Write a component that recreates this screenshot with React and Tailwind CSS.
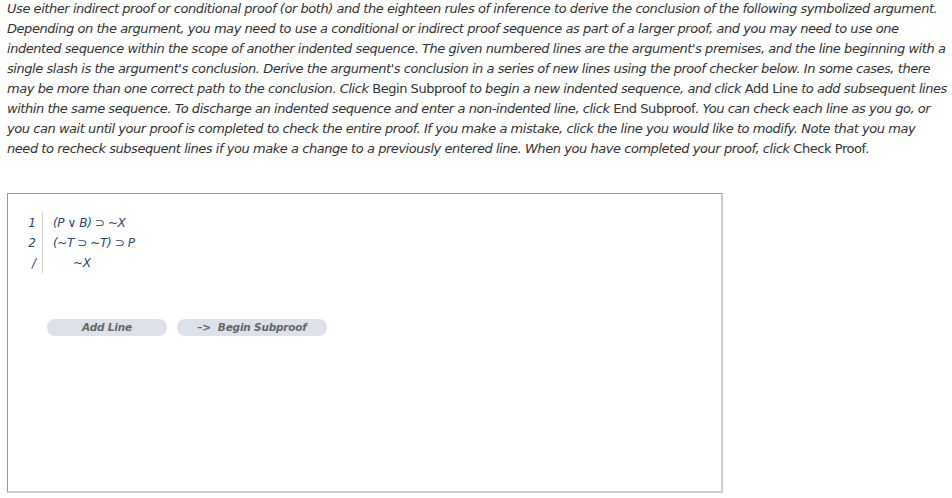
import React from "react";

const lines = [
  <>Use either indirect proof or conditional proof (or both) and the eighteen rules of inference to derive the conclusion of the following symbolized argument.</>,
  <>Depending on the argument, you may need to use a conditional or indirect proof sequence as part of a larger proof, and you may need to use one</>,
  <>indented sequence within the scope of another indented sequence. The given numbered lines are the argument's premises, and the line beginning with a</>,
  <>single slash is the argument's conclusion. Derive the argument's conclusion in a series of new lines using the proof checker below. In some cases, there</>,
  <>may be more than one correct path to the conclusion. Click <span className="not-italic">Begin Subproof</span> to begin a new indented sequence, and click <span className="not-italic">Add Line</span> to add subsequent lines</>,
  <>within the same sequence. To discharge an indented sequence and enter a non-indented line, click <span className="not-italic">End Subproof</span>. You can check each line as you go, or</>,
  <>you can wait until your proof is completed to check the entire proof. If you make a mistake, click the line you would like to modify. Note that you may</>,
  <>need to recheck subsequent lines if you make a change to a previously entered line. When you have completed your proof, click <span className="not-italic">Check Proof</span>.</>,
];

export default function App() {
  return (
    <div className="w-[952px] h-[498px] bg-white overflow-hidden" style={{ fontFamily: '"DejaVu Sans", Verdana, sans-serif' }}>
      <div className="pl-[7px] text-[13px] leading-[20px] italic text-[#333] tracking-[-0.45px] -mt-[1px]">
        {lines.map((l, i) => (
          <div key={i} className="whitespace-nowrap">{l}</div>
        ))}
      </div>
      <div className="ml-[7px] mt-[34px] w-[716px] h-[300px] border-t border-l border-[#999] border-r-2 border-b-2 border-r-[#ccc] border-b-[#ccc]">
        <div className="flex pt-[19px] pl-[19px]">
          <div className="flex flex-col w-[16px] pr-[6px] border-r border-[#ccc] text-[12px] leading-[20px] italic text-[#2a4673] text-right">
            <span>1</span>
            <span>2</span>
            <span>/</span>
          </div>
          <div className="flex flex-col pl-[10px] text-[12px] leading-[20px] italic text-[#2a4673] tracking-[-0.4px]">
            <span>(P ∨ B) ⊃ ~X</span>
            <span>(~T ⊃ ~T) ⊃ P</span>
            <span className="pl-[20px]">~X</span>
          </div>
        </div>
        <div className="flex gap-[10px] pl-[39px] mt-[46px]">
          <button className="w-[120px] h-[17px] rounded-[8px] bg-[#dde2ea] text-[10.5px] font-bold italic text-[#666] leading-[17px] tracking-[-0.2px]">Add Line</button>
          <button className="w-[150px] h-[17px] rounded-[8px] bg-[#dde2ea] text-[10.5px] font-bold italic text-[#666] leading-[17px] tracking-[-0.2px]">–&gt;&nbsp; Begin Subproof</button>
        </div>
      </div>
    </div>
  );
}
